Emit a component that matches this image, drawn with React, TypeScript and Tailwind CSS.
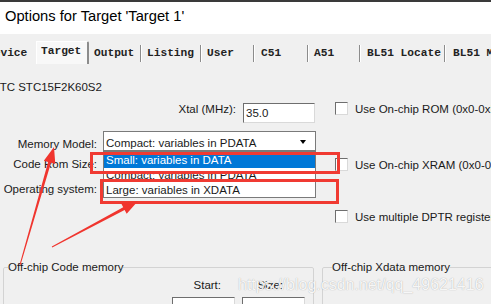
const sunken =
  "border border-t-[#6e6e6e] border-l-[#6e6e6e] border-r-[#d9d9d9] border-b-[#d9d9d9] bg-white";

function Sep() {
  return <div className="mt-[4px] h-[17px] w-[2px] shrink-0 border-l border-l-[#8c8c8c] border-r border-r-white" />;
}

function Checkbox({ label }: { label: string }) {
  return (
    <div className="flex h-[13px] items-center gap-[7px] whitespace-nowrap">
      <div className={"h-[13px] w-[13px] shrink-0 " + sunken} />
      <span className="leading-[14px]">{label}</span>
    </div>
  );
}

export default function App() {
  return (
    <div className="relative h-[304px] w-[491px] overflow-hidden bg-[#f0f0f0] font-['Liberation_Sans',Arial,sans-serif] text-[11.5px] text-[#1a1a1a]">
      {/* window top edge */}
      <div className="h-[2px] bg-[#3a3a3a]" />
      {/* title bar */}
      <div className="h-[32px] bg-white pl-[5px] pt-[6px] text-[14.7px] leading-[17px] text-black">
        Options for Target 'Target 1'
      </div>

      {/* tabs */}
      <div className="-ml-[18px] mt-[7px] flex h-[23px] font-['Liberation_Mono',monospace] text-[11.2px] font-bold leading-[13px] text-[#222]">
        <div className="flex w-[54px] shrink-0 items-start pl-[5px] pt-[6px]">Device</div>
        <div className="flex w-[53px] shrink-0 items-start rounded-tr-[2px] border-l border-t border-r-2 border-l-white border-t-white border-r-[#8c8c8c] bg-[#f8f8f8] pl-[4px] pt-[3px]">
          Target
        </div>
        <div className="flex w-[51px] shrink-0 items-start pl-[5px] pt-[6px]">Output</div>
        <div className="flex w-[60px] shrink-0 items-start">
          <Sep />
          <span className="ml-[5px] pt-[6px]">Listing</span>
        </div>
        <div className="flex w-[53px] shrink-0 items-start">
          <Sep />
          <span className="ml-[5px] pt-[6px]">User</span>
        </div>
        <div className="flex w-[54px] shrink-0 items-start">
          <Sep />
          <span className="ml-[6px] pt-[6px]">C51</span>
        </div>
        <div className="flex w-[52px] shrink-0 items-start">
          <Sep />
          <span className="ml-[5px] pt-[6px]">A51</span>
        </div>
        <div className="flex w-[85px] shrink-0 items-start whitespace-nowrap">
          <Sep />
          <span className="ml-[6px] pt-[6px]">BL51 Locate</span>
        </div>
        <div className="flex w-[90px] shrink-0 items-start whitespace-nowrap">
          <Sep />
          <span className="ml-[7px] pt-[6px]">BL51 Misc</span>
        </div>
      </div>

      {/* content */}
      <div className="flex h-[196px]">
        <div className="w-[320px] shrink-0">
          <div className="-ml-[8px] mt-[16px] leading-[14px] whitespace-nowrap">STC STC15F2K60S2</div>
          <div className="mt-[8px] flex justify-end gap-[7px] pr-[5px]">
            <span className="leading-[14px]">Xtal (MHz):</span>
            <div className={"mt-[1px] h-[20px] w-[72px] pl-[2px] pt-[2px] leading-[14px] " + sunken}>35.0</div>
          </div>
          <div className="mt-[8px] flex">
            <span className="mt-[6px] w-[97px] text-right leading-[14px]">Memory Model:</span>
            <div className="relative ml-[6px] h-[20px] w-[213px] border border-[#7a7a7a] bg-white pl-[2px] pt-[4px] leading-[14px] whitespace-nowrap">
              Compact: variables in PDATA
              <div className="absolute right-[9px] top-[8px] h-0 w-0 border-l-[3.5px] border-r-[3.5px] border-t-[4px] border-l-transparent border-r-transparent border-t-black" />
            </div>
          </div>
          <div className="mt-[6px] w-[97px] text-right leading-[14px]">Code Rom Size:</div>
          <div className="mt-[11px] w-[97px] text-right leading-[14px] whitespace-nowrap">Operating system:</div>
        </div>
        <div className="pl-[15px]">
          <div className="mt-[38px]">
            <Checkbox label="Use On-chip ROM (0x0-0xEFFF)" />
          </div>
          <div className="mt-[43px]">
            <Checkbox label="Use On-chip XRAM (0x0-0x6FF)" />
          </div>
          <div className="mt-[39px]">
            <Checkbox label="Use multiple DPTR registers" />
          </div>
        </div>
      </div>

      {/* group boxes */}
      <div className="flex">
        <fieldset className="ml-[3px] h-[80px] w-[311px] shrink-0 rounded-[2px] border border-[#d3d3d3]">
          <legend className="ml-[4px] leading-[14px]">Off-chip Code memory</legend>
          <div className="pt-[4px]">
            <div className="flex justify-end gap-[7px] pr-[8px] leading-[14px]">
              <span className="w-[63px] pr-[14px] text-right">Start:</span>
              <span className="w-[63px] pr-[22px] text-right">Size:</span>
            </div>
            <div className="mt-[5px] flex justify-end gap-[7px] pr-[8px]">
              <div className={"h-[20px] w-[63px] " + sunken} />
              <div className={"h-[20px] w-[63px] " + sunken} />
            </div>
          </div>
        </fieldset>
        <fieldset className="ml-[8px] h-[80px] w-[200px] shrink-0 rounded-[2px] border border-[#d3d3d3]">
          <legend className="ml-[9px] leading-[14px] whitespace-nowrap">Off-chip Xdata memory</legend>
        </fieldset>
      </div>

      {/* open dropdown list */}
      <div className="absolute left-[103px] top-[151px] flex h-[47px] w-[213px] flex-col border border-[#7a7a7a] bg-white whitespace-nowrap">
        <div className="flex h-[16px] shrink-0 items-center bg-[#0078d7] pl-[2px] leading-[14px] text-white">
          Small: variables in DATA
        </div>
        <div className="h-[11px] shrink-0 overflow-hidden pl-[2px] pt-[0px] leading-[14px]">
          Compact: variables in PDATA
        </div>
        <div className="h-[18px] shrink-0 border-t border-[#c8c8c8] pl-[2px] pt-[3px] leading-[14px]">
          Large: variables in XDATA
        </div>
      </div>

      {/* red annotation boxes */}
      <div className="absolute left-[90px] top-[152px] h-[22px] w-[250px] border-[3px] border-[#f03a32]" />
      <div className="absolute left-[100px] top-[179px] h-[25px] w-[239px] border-[3px] border-[#f03a32]" />

      {/* red arrows */}
      <svg className="pointer-events-none absolute left-0 top-0" width="491" height="304" viewBox="0 0 491 304">
        <polygon
          fill="#f0352e"
          points="20.5,265.1 51,162.8 55.3,164 54,147 43.8,160.7 48.1,162 19.5,264.9"
        />
        <polygon
          fill="#f0352e"
          points="52.2,247.4 124.6,209.9 126.7,213.8 138,201 121.1,203.3 123.2,207.2 51.8,246.6"
        />
      </svg>

      {/* watermark */}
      <div className="absolute left-[238px] top-[277px] whitespace-nowrap text-[16px] leading-[16px] text-white/90 [text-shadow:0_0_1px_rgba(0,0,0,0.35)]">
        https://blog.csdn.net/qq_49621416
      </div>
    </div>
  );
}
